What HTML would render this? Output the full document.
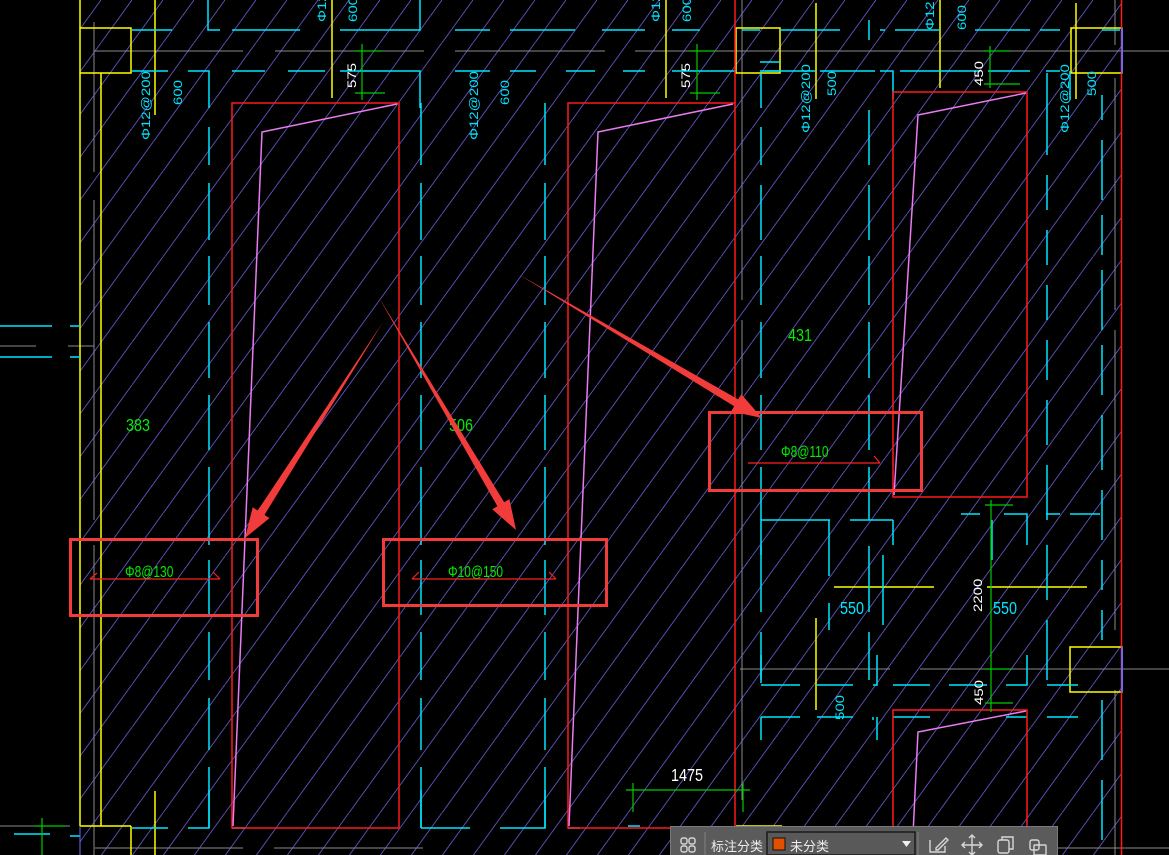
<!DOCTYPE html>
<html><head><meta charset="utf-8"><style>
html,body{margin:0;padding:0;background:#000;width:1169px;height:855px;overflow:hidden}
svg{display:block}
.t{font-family:"Liberation Sans Narrow","Liberation Sans",sans-serif}
</style></head><body>
<svg width="1169" height="855" viewBox="0 0 1169 855" xmlns="http://www.w3.org/2000/svg">
<defs>
<pattern id="h" patternUnits="userSpaceOnUse" x="8" y="0" width="31" height="42.78">
<line x1="-1" y1="44.16" x2="32" y2="-1.38" stroke="#6f62e0" stroke-width="0.8"/>
</pattern>
</defs>
<rect width="1169" height="855" fill="#000"/>
<rect x="80" y="0" width="1042" height="855" fill="url(#h)"/>

<g stroke="#8a8a8a" stroke-width="1" fill="none">
<line x1="94" y1="51" x2="243" y2="51"/><line x1="275" y1="51" x2="424" y2="51"/>
<line x1="455" y1="51" x2="605" y2="51"/><line x1="635" y1="51" x2="1169" y2="51"/>
<line x1="94" y1="22" x2="94" y2="172"/><line x1="94" y1="200" x2="94" y2="520"/>
<line x1="94" y1="545" x2="94" y2="855"/>
<line x1="0" y1="826" x2="70" y2="826"/>
<line x1="95" y1="848" x2="243" y2="848"/><line x1="274" y1="848" x2="423" y2="848"/>
<line x1="0" y1="346" x2="36" y2="346"/><line x1="68" y1="346" x2="94" y2="346"/>
<line x1="742" y1="0" x2="742" y2="300"/><line x1="742" y1="320" x2="742" y2="800"/>
<line x1="740" y1="669" x2="890" y2="669"/><line x1="920" y1="669" x2="1169" y2="669"/>
<line x1="1115" y1="0" x2="1115" y2="45"/><line x1="1115" y1="78" x2="1115" y2="310"/>
<line x1="1115" y1="330" x2="1115" y2="630"/><line x1="1115" y1="690" x2="1115" y2="855"/>
<line x1="740" y1="848" x2="1169" y2="848"/>
</g>

<g stroke="#ffff00" stroke-width="1.5" fill="none">
<line x1="80" y1="0" x2="80" y2="28"/>
<rect x="80" y="28" width="51" height="45"/>
<line x1="80" y1="73" x2="80" y2="826"/><line x1="101" y1="73" x2="101" y2="826"/>
<line x1="80" y1="826" x2="131" y2="826"/><line x1="131" y1="826" x2="131" y2="855"/>
<line x1="155" y1="0" x2="155" y2="115"/><line x1="155" y1="791" x2="155" y2="855"/>
<line x1="332" y1="0" x2="332" y2="98"/>
<line x1="666" y1="0" x2="666" y2="98"/>
<rect x="736" y="28" width="44" height="45"/>
<line x1="816" y1="3" x2="816" y2="99"/>
<line x1="940" y1="0" x2="940" y2="88"/>
<rect x="1071" y="28" width="51" height="45"/>
<line x1="1076" y1="3" x2="1076" y2="99"/>
<line x1="834" y1="587" x2="934" y2="587"/><line x1="987" y1="587" x2="1087" y2="587"/>
<line x1="816" y1="618" x2="816" y2="710"/>
<rect x="1070" y="647" width="52" height="45"/>
<line x1="736" y1="826" x2="782" y2="826"/>
</g>

<g stroke="#00e5ff" stroke-width="1.5" fill="none">
<path d="M0 326H52M70 326H80M0 357H52M70 357H80M14 834H50M70 836H80"/>
<path d="M132 30H172M220 30H208V0M232 30H300M340 30H420V0M455 30H490M510 30H575M602 30H645M672 30H700M742 30H760M780 30H840M880 30H885M895 30H940M975 30H1030M1040 30H1060M1102 30H1120"/>
<path d="M132 71H168M188 71H209V108M232 71H265M288 71H325M340 71H420V108"/>
<path d="M455 71H490M510 71H536M566 71H595M623 71H645M672 71H735"/>
<path d="M765 71H815M820 71H875M880 71H893V99M900 71H980M988 71H1030M1046 71H1060M1070 71V100"/>
<path d="M760 62H780M760 71H780"/>
<path d="M209 127V165M209 183V240M209 256V305M209 322V378M209 395V450M209 467V545M209 560V615M209 632V680M209 698V750M209 767V828" />
<path d="M421 103V165M421 183V240M421 256V305M421 322V378M421 395V450M421 467V545M421 560V615M421 632V680M421 698V750M421 767V828"/>
<path d="M545 103V165M545 183V240M545 256V305M545 322V378M545 395V450M545 467V545M545 560V615M545 632V680M545 698V750M545 767V828"/>
<path d="M761 73V108M761 127V165M761 185V240M761 256V305M761 322V378M761 395V450M761 467V520M761 546V612M761 632V680"/>
<path d="M869 20V40M869 110V165M869 185V240M869 256V305M869 322V378M869 395V450M869 467V520M869 546V612M869 632V680"/>
<path d="M1047 73V155M1047 175V210M1047 230V265M1047 285V320M1047 340V380M1047 400V445M1047 465V520M1047 545V600M1047 620V680"/>
<path d="M1102 95V120M1102 140V200M1102 215V255M1102 270V330M1102 345V395M1102 415V470M1102 490V540M1102 560V590M1102 610V640M1102 700V760M1102 780V840"/>
<path d="M132 828H168M188 828H209V790M232 828H245"/>
<path d="M421 828V790M421 828H470M500 828H545V790"/>
<path d="M568 828H580M628 826H640"/>
<path d="M761 555V520H830M850 520H893M893 520V545"/>
<path d="M961 514H980M1004 514H1027V545M1046 514H1060M1070 514H1100"/>
<path d="M761 683V655M761 685H800M817 685H853M873 685H877V655"/>
<path d="M893 685H930M949 685H987M1006 685H1027V655M1047 685H1078"/>
<path d="M761 717H800M817 717H853M873 717V720M893 717H930M1006 717H1027M1047 717H1078"/>
<path d="M761 717V740M877 717V740"/>
<path d="M829 520V576M829 603V630M883 555V625"/>
<path d="M992 520V560"/>
</g>

<g stroke="#ff1a1a" stroke-width="1.5" fill="none">
<rect x="232" y="103" width="167" height="725"/>
<rect x="568" y="103" width="167" height="725"/>
<rect x="893" y="92" width="134" height="405"/>
<path d="M893 855V710H1027V855"/>
<line x1="1121.5" y1="0" x2="1121.5" y2="855"/>
<line x1="735" y1="0" x2="735" y2="103"/>
</g>
<line x1="1122" y1="28" x2="1122" y2="73" stroke="#6a6af0" stroke-width="2"/>
<line x1="1122" y1="647" x2="1122" y2="692" stroke="#6a6af0" stroke-width="2"/>
<line x1="80" y1="855" x2="80" y2="826" stroke="#6a6af0" stroke-width="1"/>

<g stroke="#e87cf0" stroke-width="1.5" fill="none">
<path d="M397 104L262 132L233 826"/>
<path d="M733 104L598 132L569 826"/>
<path d="M1026 93L918 115L894 495"/>
<path d="M1026 711L918 732L912 855"/>
</g>

<g stroke="#00cc00" stroke-width="1.2" fill="none">
<path d="M362 44V100M355 51H382M355 93H385"/>
<path d="M697 44V100M690 51H715M690 93H720"/>
<path d="M990 46V88M984 51H1010M984 84H1020"/>
<path d="M991 500V712M985 505H1013M985 669H1012M985 703H1013"/>
<path d="M626 790H750M633 783V812M743 783V812"/>
<path d="M42 818V855M35 826H65"/>
</g>

<g class="t" font-size="15" fill="#00e5ff">
<text transform="translate(150,140) rotate(-90) scale(1,0.8)">Φ12@200</text>
<text transform="translate(182,105) rotate(-90) scale(1,0.8)">600</text>
<text transform="translate(478,140) rotate(-90) scale(1,0.8)">Φ12@200</text>
<text transform="translate(509,105) rotate(-90) scale(1,0.8)">600</text>
<text transform="translate(810,133) rotate(-90) scale(1,0.8)">Φ12@200</text>
<text transform="translate(836,96) rotate(-90) scale(1,0.8)">500</text>
<text transform="translate(1069,133) rotate(-90) scale(1,0.8)">Φ12@200</text>
<text transform="translate(1096,96) rotate(-90) scale(1,0.8)">500</text>
<text transform="translate(326,22) rotate(-90) scale(1,0.8)">Φ12</text>
<text transform="translate(357,22) rotate(-90) scale(1,0.8)">600</text>
<text transform="translate(660,22) rotate(-90) scale(1,0.8)">Φ12</text>
<text transform="translate(691,22) rotate(-90) scale(1,0.8)">600</text>
<text transform="translate(934,30) rotate(-90) scale(1,0.8)">Φ12</text>
<text transform="translate(966,30) rotate(-90) scale(1,0.8)">600</text>
<text transform="translate(844,720) rotate(-90) scale(1,0.8)">500</text>
<text transform="translate(840,614) scale(0.8,1)" font-size="18">550</text>
<text transform="translate(993,614) scale(0.8,1)" font-size="18">550</text>
</g>
<g class="t" font-size="15" fill="#ffffff">
<text transform="translate(356,88) rotate(-90) scale(1,0.8)">575</text>
<text transform="translate(690,88) rotate(-90) scale(1,0.8)">575</text>
<text transform="translate(983,86) rotate(-90) scale(1,0.8)">450</text>
<text transform="translate(983,705) rotate(-90) scale(1,0.8)">450</text>
<text transform="translate(982,612) rotate(-90) scale(1,0.8)">2200</text>
<text transform="translate(671,781) scale(0.8,1)" font-size="18">1475</text>
</g>
<g class="t" fill="#00ee00">
<text transform="translate(126,431) scale(0.8,1)" font-size="18">383</text>
<text transform="translate(449,431) scale(0.8,1)" font-size="18">506</text>
<text transform="translate(788,341) scale(0.8,1)" font-size="18">431</text>
<text transform="translate(125,577) scale(0.75,1)" font-size="16">Φ8@130</text>
<text transform="translate(448,577) scale(0.75,1)" font-size="16">Φ10@150</text>
<text transform="translate(781,457) scale(0.75,1)" font-size="16">Φ8@110</text>
</g>

<g stroke="#ff2020" stroke-width="1.2" fill="none">
<path d="M90 579H220M90 579L97 573M220 579L213 572"/>
<path d="M412 579H556M412 579L419 572M556 579L549 572"/>
<path d="M748 463H880M880 463L874 456"/>
</g>

<g stroke="#f23b3b" stroke-width="3" fill="none">
<rect x="70.5" y="539.5" width="187" height="76"/>
<rect x="383.5" y="539.5" width="223" height="66"/>
<rect x="709.5" y="412.5" width="212" height="78"/>
</g>
<g fill="#f23b3b">
<polygon points="383,322 264.5,514.9 269.5,518.1 245,538 252.7,507.3 257.7,510.5"/>
<polygon points="378,296 504.2,502.2 509.4,499.1 516,530 492.2,509.3 497.4,506.2"/>
<polygon points="518,274 738.2,399.4 741.3,394.2 762,418 731.1,411.4 734.2,406.2"/>
</g>

<rect x="670.5" y="826.5" width="387" height="29" fill="#5b5b5b" stroke="#7a7a7a"/>
<g stroke="#d8d8d8" stroke-width="1.4" fill="none">
<rect x="681" y="838" width="6" height="6" rx="2"/><rect x="689" y="838" width="6" height="6" rx="2"/>
<rect x="681" y="846" width="6" height="6" rx="2"/><rect x="689" y="846" width="6" height="6" rx="2"/>
<path d="M930 840V852H945V846M936 848L946 838L948 840L938 850H936Z"/>
<path d="M972 835V855M962 845H982M969 838L972 835L975 838M969 852L972 855L975 852M965 842L962 845L965 848M979 842L982 845L979 848"/>
<rect x="998" y="840" width="11" height="13" rx="2"/><path d="M1002 840V837H1013V849H1009"/>
<rect x="1030" y="840" width="9" height="10" rx="2"/><rect x="1034" y="845" width="12" height="10" rx="1"/>
</g>
<line x1="705" y1="832" x2="705" y2="855" stroke="#808080"/>
<line x1="918" y1="832" x2="918" y2="855" stroke="#808080"/>
<text x="711" y="851" font-family="'Liberation Sans','Noto Sans CJK SC',sans-serif" font-size="13" fill="#eeeeee">标注分类</text>
<rect x="767" y="832" width="148" height="23" fill="#595959" stroke="#1a1a1a" stroke-width="1.5"/>
<rect x="773" y="838" width="12" height="12" fill="#e05000" stroke="#111"/>
<text x="790" y="851" font-family="'Liberation Sans','Noto Sans CJK SC',sans-serif" font-size="13" fill="#eeeeee">未分类</text>
<polygon points="902,841 911,841 906.5,847" fill="#eee"/>
</svg>
</body></html>
